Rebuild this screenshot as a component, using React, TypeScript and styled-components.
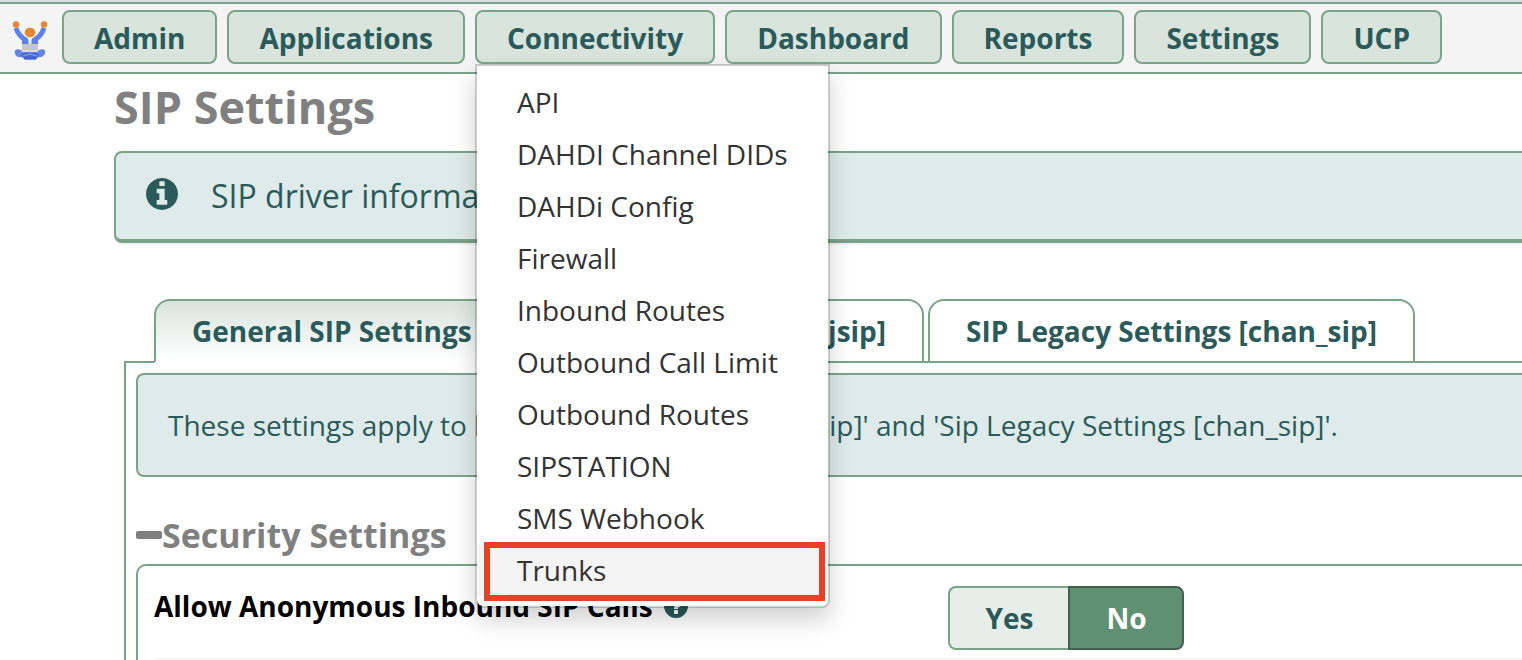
import React from "react";
import styled, { createGlobalStyle, css } from "styled-components";

const GREEN = "#7aa489";
const TEAL = "#2a5a59";
const PALE = "#dfebea";

const GlobalStyle = createGlobalStyle`
  * { box-sizing: border-box; }
  html, body { margin: 0; height: 100%; }
  body {
    overflow: hidden;
    background: #fff;
    color: #333;
    font-family: "Open Sans", "Noto Sans", sans-serif;
    font-size: 28px;
    line-height: 40px;
  }
  #root { height: 100%; overflow: hidden; }
  button { font: inherit; }
`;

const TopBar = styled.header`
  display: flex;
  align-items: center;
  height: 72px;
  margin-top: 2px;
  padding-left: 12px;
  background: #f4f4f4;
  border-top: 2px solid ${GREEN};
  border-bottom: 2px solid ${GREEN};
  box-shadow: 0 -2px 0 #d9dcdf;
`;

const Brand = styled.a`
  display: block;
  width: 36px;
  height: 44px;
  margin-right: 14px;

  svg { display: block; }
`;

const Menu = styled.nav`
  display: flex;
  gap: 10px;
`;

const MenuEntry = styled.div`
  position: relative;
`;

const MenuButton = styled.button`
  display: block;
  height: 54px;
  margin-bottom: 2px;
  padding: 2px 30px 0;
  border: 2px solid ${GREEN};
  border-radius: 8px;
  background: #d9e4dd;
  color: ${TEAL};
  font-weight: 700;
  white-space: nowrap;
`;

const Dropdown = styled.ul`
  position: absolute;
  top: 54px;
  left: 0;
  z-index: 10;
  width: 355px;
  margin: 0;
  padding: 10px 0;
  list-style: none;
  background: #fff;
  background-clip: padding-box;
  border: 2px solid rgba(0, 0, 0, 0.18);
  border-radius: 0 0 8px 8px;
  box-shadow: 0 12px 24px rgba(0, 0, 0, 0.18);
`;

const DropdownItem = styled.li<{ $active?: boolean }>`
  position: relative;
  background: ${(p) => (p.$active ? "#f4f4f4" : "transparent")};

  ${(p) =>
    p.$active &&
    css`
      &::after {
        content: "";
        position: absolute;
        inset: -2px 3px -5px 7px;
        border: 6px solid #ea4025;
      }
    `}
`;

const DropdownLink = styled.a`
  display: block;
  padding: 6px 40px;
  color: #333;
  text-decoration: none;
  white-space: nowrap;
`;

const Page = styled.main`
  padding-left: 114px;
`;

const PageTitle = styled.h1`
  margin: 0;
  padding-top: 3px;
  color: #808080;
  font-size: 45px;
  line-height: 60px;
  font-weight: 700;
`;

const DriverNotice = styled.section`
  display: flex;
  align-items: center;
  gap: 33px;
  height: 92px;
  margin-top: 14px;
  padding-left: 30px;
  border: 2px solid ${GREEN};
  border-width: 2px 0 4px 2px;
  border-radius: 8px 0 0 8px;
  background: ${PALE};
  box-shadow: 0 2px 2px rgba(0, 0, 0, 0.06);
  color: ${TEAL};
  font-size: 32px;

  svg { margin-bottom: 4px; }
`;

const TabList = styled.div`
  display: flex;
  gap: 4px;
  margin-top: 56px;
  padding-left: 40px;
`;

const Tab = styled.button<{ $selected?: boolean }>`
  position: relative;
  height: 64px;
  margin-bottom: -2px;
  padding: 0 36px;
  border: 2px solid ${GREEN};
  border-bottom-color: ${(p) => (p.$selected ? "#fff" : GREEN)};
  border-radius: 16px 16px 0 0;
  background: ${(p) => (p.$selected ? "linear-gradient(#d9e4dd, #fff)" : "#fff")};
  color: ${TEAL};
  font-weight: 700;
  white-space: nowrap;
`;

const TabPanel = styled.div`
  margin-left: 10px;
  padding: 10px 0 0 10px;
  border-top: 2px solid ${GREEN};
  border-left: 2px solid ${GREEN};
`;

const PanelNotice = styled.p`
  margin: 0;
  padding: 30px;
  height: 104px;
  border: 2px solid ${GREEN};
  border-right: 0;
  border-radius: 8px 0 0 8px;
  background: ${PALE};
  color: ${TEAL};
  white-space: nowrap;
`;

const SectionTitle = styled.h2`
  display: flex;
  align-items: center;
  margin: 34px 0 5px;
  color: #808080;
  font-size: 34px;
  line-height: 48px;
  font-weight: 700;
`;

const CollapseMark = styled.span`
  width: 26px;
  height: 8px;
  border-radius: 2px;
  background: #808080;
`;

const Settings = styled.section`
  padding: 20px 0 0 12px;
  border-top: 2px solid ${GREEN};
  border-left: 2px solid ${GREEN};
  border-radius: 10px 0 0 0;
`;

const SettingRow = styled.div`
  display: grid;
  grid-template-columns: 29fr 21fr;
  padding: 0 0 8px 4px;
`;

const SettingDivider = styled.hr`
  height: 10px;
  margin: 0;
  border: 0;
  border-radius: 8px 0 0 0;
  background: #f4f4f4;
`;

const SettingName = styled.div`
  display: flex;
  align-items: center;
  gap: 11px;
  height: 40px;
  color: #000;
  font-weight: 700;

  svg { color: ${TEAL}; }
`;

const Switch = styled.div`
  display: flex;
  height: 64px;
  padding-left: 1px;
`;

const Choice = styled.label<{ $side: "left" | "right" }>`
  display: flex;
  align-items: center;
  justify-content: center;
  width: ${(p) => (p.$side === "left" ? "120px" : "116px")};
  border: 2px solid ${GREEN};
  border-right-width: ${(p) => (p.$side === "left" ? "0" : "2px")};
  border-radius: ${(p) => (p.$side === "left" ? "8px 0 0 8px" : "0 8px 8px 0")};
  background: #e7ede9;
  color: ${TEAL};
  font-weight: 700;

  &:has(input:checked) {
    border-color: #42604d;
    background: #5f9072;
    color: #fff;
  }

  input {
    position: absolute;
    opacity: 0;
  }
`;

const MENUS = ["Admin", "Applications", "Connectivity", "Dashboard", "Reports", "Settings", "UCP"];

const CONNECTIVITY = [
  "API",
  "DAHDI Channel DIDs",
  "DAHDi Config",
  "Firewall",
  "Inbound Routes",
  "Outbound Call Limit",
  "Outbound Routes",
  "SIPSTATION",
  "SMS Webhook",
  "Trunks",
];

function Logo() {
  return (
    <svg width="36" height="44" viewBox="0 0 36 44" aria-hidden="true">
      <g fill="none" stroke="#5f80ea" strokeLinecap="butt">
        <path d="M4 12C5.500 17 8 21 15 25" strokeWidth="5" />
        <path d="M32 12C30.500 17 28 21 21 25" strokeWidth="5" />
      </g>
      <path d="M10 21l6 2 1 2v6h-7z M26 21l-6 2-1 2v6h7z" fill="#5f80ea" />
      <path d="M16.500 23h3v7h-3z" fill="#eef0f6" />
      <path
        d="M3.500 34C6 32 9 34 11 35h14c2-1 5-3 7.500-1 1.500 2 .5 5-2 6.500-2 1-4 .5-5.500 1l-1.500 2h-11L11 41.500c-2-.500-4 0-6-1-2-1.500-3-4.500-1.500-6.500z"
        fill="#6684e4"
      />
      <path d="M12 37h12l3 2-3 4.500H13L9 39z" fill="#4562d2" />
      <path d="M11 40l7-2 7 2" fill="none" stroke="#7d97ec" strokeWidth="1.500" />
      <path d="M10 28h16v8H10z" fill="#c6c7ca" />
      <path d="M10 34h16v2H10z" fill="#dadbdd" />
      <circle cx="4" cy="8.500" r="3.200" fill="#e88532" />
      <circle cx="32" cy="8.500" r="3.200" fill="#e88532" />
      <ellipse cx="18" cy="16.500" rx="5.200" ry="4.800" fill="#e88532" />
    </svg>
  );
}

const DISC =
  "M1536 768q0 209-103 385.500t-279.500 279.500-385.500 103-385.500-103-279.500-279.500-103-385.500 103-385.500 279.500-279.500 385.500-103 385.500 103 279.500 279.500 103 385.500z";

function InfoIcon() {
  return (
    <svg width="32" height="32" viewBox="0 0 1536 1536" fill="currentColor" aria-hidden="true">
      <path
        d={`M1024 1248v-160q0-14-9-23t-23-9h-96v-512q0-14-9-23t-23-9h-320q-14 0-23 9t-9 23v160q0 14 9 23t23 9h96v320h-96q-14 0-23 9t-9 23v160q0 14 9 23t23 9h448q14 0 23-9t9-23zM896 352v-160q0-14-9-23t-23-9h-192q-14 0-23 9t-9 23v160q0 14 9 23t23 9h192q14 0 23-9t9-23z${DISC}`}
      />
    </svg>
  );
}

function HelpIcon() {
  return (
    <svg width="24" height="24" viewBox="0 0 1536 1536" fill="currentColor" aria-hidden="true">
      <path
        d={`M896 1248v-192q0-14-9-23t-23-9h-192q-14 0-23 9t-9 23v192q0 14 9 23t23 9h192q14 0 23-9t9-23zM1152 576q0-88-55.500-163t-138.500-116-170-41q-243 0-371 213-15 24 8 42l132 100q7 6 19 6 16 0 25-12 53-68 86-92 34-24 86-24 48 0 85.500 26t37.500 59q0 38-20 61t-68 45q-63 28-115.500 86.500t-52.500 125.500v36q0 14 9 23t23 9h192q14 0 23-9t9-23q0-19 21.500-49.500t54.500-49.500q32-18 49-28.500t46-35 44.500-48 28-60.500 12.500-81z${DISC}`}
      />
    </svg>
  );
}

export default function App() {
  return (
    <>
      <GlobalStyle />
      <TopBar>
        <Brand href="#" aria-label="Home">
          <Logo />
        </Brand>
        <Menu>
          {MENUS.map((name) => (
            <MenuEntry key={name}>
              <MenuButton type="button">{name}</MenuButton>
              {name === "Connectivity" && (
                <Dropdown>
                  {CONNECTIVITY.map((item) => (
                    <DropdownItem key={item} $active={item === "Trunks"}>
                      <DropdownLink href="#">{item}</DropdownLink>
                    </DropdownItem>
                  ))}
                </Dropdown>
              )}
            </MenuEntry>
          ))}
        </Menu>
      </TopBar>
      <Page>
        <PageTitle>SIP Settings</PageTitle>
        <DriverNotice>
          <InfoIcon />
          <span>SIP driver information</span>
        </DriverNotice>
        <TabList role="tablist">
          <Tab type="button" role="tab" aria-selected="true" $selected>
            General SIP Settings
          </Tab>
          <Tab type="button" role="tab" aria-selected="false">
            SIP Settings [chan_pjsip]
          </Tab>
          <Tab type="button" role="tab" aria-selected="false">
            SIP Legacy Settings [chan_sip]
          </Tab>
        </TabList>
        <TabPanel role="tabpanel">
          <PanelNotice>
            These settings apply to both 'SIP Settings [chan_pjsip]' and 'Sip Legacy Settings
            [chan_sip]'.
          </PanelNotice>
          <SectionTitle>
            <CollapseMark />
            Security Settings
          </SectionTitle>
          <Settings>
            <SettingRow>
              <SettingName id="anonymous">
                Allow Anonymous Inbound SIP Calls
                <HelpIcon />
              </SettingName>
              <Switch role="radiogroup" aria-labelledby="anonymous">
                <Choice $side="left">
                  <input type="radio" name="anonymous" value="yes" />
                  Yes
                </Choice>
                <Choice $side="right">
                  <input type="radio" name="anonymous" value="no" defaultChecked />
                  No
                </Choice>
              </Switch>
            </SettingRow>
            <SettingDivider />
          </Settings>
        </TabPanel>
      </Page>
    </>
  );
}
